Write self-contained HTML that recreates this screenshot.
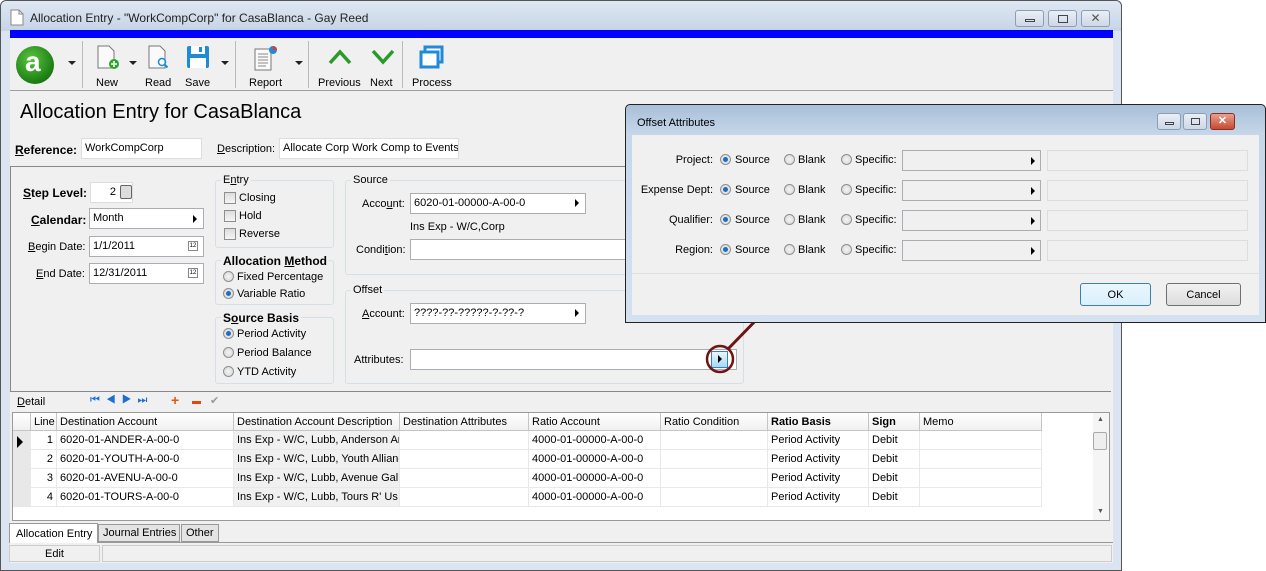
<!DOCTYPE html>
<html><head><meta charset="utf-8"><style>
*{box-sizing:border-box}
body{margin:0;width:1266px;height:571px;position:relative;background:#fff;font-family:"Liberation Sans",sans-serif;font-size:11px;color:#000;overflow:hidden}
.a{position:absolute}
.inp{position:absolute;background:#fff;border:1px solid #abadb3;padding:0 3px;line-height:19px;font-size:11px;white-space:nowrap;overflow:hidden}
.grp{position:absolute;border:1px solid #d5dfe5;border-radius:3px}
.gl{position:absolute;top:-8px;left:5px;background:#f0f0f0;padding:0 2px}
.rb{position:absolute;width:11px;height:11px;border-radius:50%;border:1px solid #8e8f8f;background:radial-gradient(#f4f4f4,#d4d4d4)}
.rb.on::after{content:"";position:absolute;left:2px;top:2px;width:5px;height:5px;border-radius:50%;background:#1a6fc4}
.cb{position:absolute;width:12px;height:12px;border:1px solid #8e8f8f;background:linear-gradient(#ddd,#f5f5f5)}
.tri{position:absolute;width:0;height:0;border-top:4px solid transparent;border-bottom:4px solid transparent;border-left:4px solid #000}
.lbl{position:absolute;white-space:nowrap}
.rl{position:absolute;white-space:nowrap;text-align:right;width:90px}
.th{position:absolute;top:0;height:18px;border-right:1px solid #c5c5c5;border-bottom:1px solid #c5c5c5;padding:3px 3px;background:linear-gradient(#fff,#f0f0f0);white-space:nowrap;overflow:hidden}
.td{position:absolute;height:19px;border-right:1px solid #e8e8e8;border-bottom:1px solid #e8e8e8;padding:3px 3px;white-space:nowrap;overflow:hidden;background:#fff}
.tbl{position:absolute;top:77px;font-size:11px;text-align:center}
.wb{position:absolute;width:29px;height:17px;border:1px solid #8d9db2;border-radius:3px;background:linear-gradient(#e9eff7,#cdd8e6)}
</style></head><body>
<div class="a" style="left:0;top:0;width:1122px;height:571px;background:#dbe5f1;border:1px solid #555;border-radius:6px 6px 0 0"></div>
<div class="a" style="left:1px;top:1px;width:1120px;height:30px;background:linear-gradient(#dfe8f3,#c5d4e6);border-radius:6px 6px 0 0"></div>
<svg class="a" style="left:10px;top:9px" width="14" height="17"><path d="M1 1h8l4 4v11H1z" fill="#fff" stroke="#888"/><path d="M9 1v4h4" fill="none" stroke="#888"/></svg>
<div class="lbl" style="left:30px;top:11px;font-size:12px;color:#222">Allocation Entry - "WorkCompCorp" for CasaBlanca - Gay Reed</div>
<div class="wb" style="left:1015px;top:10px"><div class="a" style="left:9px;top:8px;width:10px;height:3px;border:1px solid #444"></div></div>
<div class="wb" style="left:1048px;top:10px"><div class="a" style="left:9px;top:4px;width:10px;height:8px;border:1px solid #444"></div></div>
<div class="wb" style="left:1081px;top:10px;text-align:center;font-size:12px;color:#555;line-height:15px">✕</div>
<div class="a" style="left:10px;top:30px;width:1103px;height:8px;background:#0000ff"></div>
<div class="a" style="left:10px;top:38px;width:1103px;height:525px;background:#f0f0f0"></div>
<div class="a" style="left:10px;top:90px;width:1103px;height:1px;background:#a0a0a0"></div>
<div class="a" style="left:16px;top:46px;width:38px;height:38px;border-radius:50%;background:radial-gradient(circle at 40% 35%,#5cc443,#1b7d12 70%,#0e4f08)"></div>
<div class="lbl" style="left:25px;top:48px;font-size:28px;font-weight:bold;color:#fff;line-height:28px">a</div>
<div class="tri" style="left:68px;top:61px;border:4px solid transparent;border-top:4px solid #222"></div>
<div class="a" style="left:82px;top:41px;width:1px;height:47px;background:#bbb"></div>
<div class="a" style="left:235px;top:41px;width:1px;height:47px;background:#bbb"></div>
<div class="a" style="left:308px;top:41px;width:1px;height:47px;background:#bbb"></div>
<div class="a" style="left:402px;top:41px;width:1px;height:47px;background:#bbb"></div>
<svg class="a" style="left:96px;top:45px" width="26" height="26"><path d="M2 1h11l5 5v17H2z" fill="#fafafa" stroke="#777"/><circle cx="18" cy="19" r="5" fill="#2aa52a"/><path d="M18 16v6M15 19h6" stroke="#fff" stroke-width="1.6"/></svg>
<div class="tri" style="left:129px;top:61px;border:4px solid transparent;border-top:4px solid #222"></div>
<svg class="a" style="left:147px;top:45px" width="26" height="26"><path d="M2 1h11l5 5v17H2z" fill="#fafafa" stroke="#777"/><circle cx="15" cy="17" r="3.5" fill="none" stroke="#1c8ad6" stroke-width="1.5"/><path d="M17.5 19.5l3 3" stroke="#1c8ad6" stroke-width="2"/></svg>
<svg class="a" style="left:186px;top:45px" width="24" height="24"><rect x="1" y="1" width="22" height="22" rx="2" fill="#1e8ad8"/><rect x="5" y="1" width="14" height="8" fill="#fff"/><rect x="13" y="2" width="3" height="5" fill="#1e8ad8"/><rect x="4" y="13" width="16" height="10" fill="#fff"/></svg>
<div class="tri" style="left:221px;top:61px;border:4px solid transparent;border-top:4px solid #222"></div>
<svg class="a" style="left:252px;top:44px" width="28" height="28"><path d="M3 5h16v21H3z" fill="#fafafa" stroke="#777"/><path d="M6 10h10M6 13h10M6 16h10M6 19h10M6 22h8" stroke="#888"/><circle cx="21" cy="6" r="4" fill="#1e8ad8"/><path d="M21 6V2a4 4 0 0 1 4 4z" fill="#e53935"/></svg>
<div class="tri" style="left:295px;top:61px;border:4px solid transparent;border-top:4px solid #222"></div>
<svg class="a" style="left:327px;top:48px" width="26" height="18"><path d="M3 15L13 4l10 11" fill="none" stroke="#2a9a2a" stroke-width="3.5"/></svg>
<svg class="a" style="left:370px;top:48px" width="26" height="18"><path d="M3 3l10 11L23 3" fill="none" stroke="#2a9a2a" stroke-width="3.5"/></svg>
<svg class="a" style="left:419px;top:45px" width="26" height="26"><rect x="6" y="2" width="17" height="15" fill="#fff" stroke="#1e8ad8" stroke-width="3"/><rect x="2" y="7" width="17" height="15" fill="#fff" stroke="#1e8ad8" stroke-width="3"/></svg>
<div class="tbl" style="left:96px">New</div>
<div class="tbl" style="left:145px">Read</div>
<div class="tbl" style="left:185px">Save</div>
<div class="tbl" style="left:249px">Report</div>
<div class="tbl" style="left:318px">Previous</div>
<div class="tbl" style="left:370px">Next</div>
<div class="tbl" style="left:412px">Process</div>
<div class="lbl" style="left:20px;top:101px;font-size:20px">Allocation Entry for CasaBlanca</div>
<div class="lbl" style="left:15px;top:143px;font-weight:bold;font-size:12px"><u>R</u>eference:</div>
<div class="inp" style="left:81px;top:138px;width:121px;height:21px;border-color:#ddd">WorkCompCorp</div>
<div class="lbl" style="left:217px;top:143px"><u>D</u>escription:</div>
<div class="inp" style="left:279px;top:138px;width:180px;height:21px;border-color:#ddd">Allocate Corp Work Comp to Events</div>
<div class="a" style="left:10px;top:166px;width:1101px;height:226px;border:1px solid #888;border-right:none"></div>
<div class="lbl" style="left:23px;top:186px;font-weight:bold;font-size:12px"><u>S</u>tep Level:</div>
<div class="inp" style="left:90px;top:182px;width:43px;height:21px;text-align:right;padding-right:16px;border-color:#ddd">2</div>
<div class="a" style="left:120px;top:185px;width:12px;height:14px;border:1px solid #666;border-radius:2px;background:#ddd"></div>
<div class="lbl" style="left:31px;top:213px;font-weight:bold;font-size:12px"><u>C</u>alendar:</div>
<div class="inp" style="left:89px;top:208px;width:115px;height:21px">Month</div><div class="tri" style="left:193px;top:215px"></div>
<div class="lbl" style="left:28px;top:241px"><u>B</u>egin Date:</div>
<div class="inp" style="left:89px;top:236px;width:115px;height:21px">1/1/2011</div>
<div class="a" style="left:188px;top:241px;width:10px;height:10px;border:1px solid #888;font-size:6px;text-align:center;line-height:9px">12</div>
<div class="lbl" style="left:36px;top:268px"><u>E</u>nd Date:</div>
<div class="inp" style="left:89px;top:263px;width:115px;height:21px">12/31/2011</div>
<div class="a" style="left:188px;top:268px;width:10px;height:10px;border:1px solid #888;font-size:6px;text-align:center;line-height:9px">12</div>
<div class="grp" style="left:215px;top:180px;width:119px;height:68px"><span class="gl" style="top:-7px">E<u>n</u>try</span></div>
<div class="cb" style="left:224px;top:192px"></div><div class="lbl" style="left:239px;top:192px">Closing</div>
<div class="cb" style="left:224px;top:210px"></div><div class="lbl" style="left:239px;top:210px">Hold</div>
<div class="cb" style="left:224px;top:228px"></div><div class="lbl" style="left:239px;top:228px">Reverse</div>
<div class="grp" style="left:215px;top:260px;width:119px;height:45px"><span class="gl" style="left:5px;top:-7px;font-weight:bold;font-size:12px">Allocation <u>M</u>ethod</span></div>
<div class="rb" style="left:223px;top:271px"></div><div class="lbl" style="left:237px;top:271px">Fixed Percentage</div>
<div class="rb on" style="left:223px;top:288px"></div><div class="lbl" style="left:237px;top:288px">Variable Ratio</div>
<div class="grp" style="left:215px;top:317px;width:119px;height:67px"><span class="gl" style="top:-7px;font-weight:bold;font-size:12px">S<u>o</u>urce Basis</span></div>
<div class="rb on" style="left:223px;top:328px"></div><div class="lbl" style="left:237px;top:328px">Period Activity</div>
<div class="rb" style="left:223px;top:347px"></div><div class="lbl" style="left:237px;top:347px">Period Balance</div>
<div class="rb" style="left:223px;top:366px"></div><div class="lbl" style="left:237px;top:366px">YTD Activity</div>
<div class="grp" style="left:345px;top:180px;width:300px;height:95px"><span class="gl" style="top:-7px">Source</span></div>
<div class="lbl" style="left:362px;top:198px">Acco<u>u</u>nt:</div>
<div class="inp" style="left:410px;top:193px;width:176px;height:21px">6020-01-00000-A-00-0</div><div class="tri" style="left:575px;top:199px"></div>
<div class="lbl" style="left:410px;top:221px">Ins Exp - W/C,Corp</div>
<div class="lbl" style="left:356px;top:244px">Condi<u>t</u>ion:</div>
<div class="inp" style="left:410px;top:239px;width:230px;height:21px"></div>
<div class="grp" style="left:345px;top:290px;width:399px;height:94px"><span class="gl" style="top:-7px">Offset</span></div>
<div class="lbl" style="left:362px;top:308px"><u>A</u>ccount:</div>
<div class="inp" style="left:410px;top:303px;width:176px;height:21px">????-??-?????-?-??-?</div><div class="tri" style="left:575px;top:309px"></div>
<div class="lbl" style="left:354px;top:354px">Attributes:</div>
<div class="inp" style="left:410px;top:349px;width:327px;height:21px"></div>
<div class="a" style="left:711px;top:351px;width:17px;height:17px;border:1px solid #3c7fb1;background:linear-gradient(#eaf6fd,#a7d9f5)"></div><div class="tri" style="left:718px;top:355px"></div>
<svg class="a" style="left:700px;top:260px" width="120" height="120"><circle cx="20" cy="99" r="13" fill="none" stroke="#6e1414" stroke-width="2.5"/><path d="M28 89L98 17" stroke="#6e1414" stroke-width="3"/><path d="M106 8L89 16l9 9z" fill="#6e1414"/></svg>
<div class="lbl" style="left:17px;top:396px"><u>D</u>etail</div>
<div class="lbl" style="left:90px;top:394px;color:#1f6fd0;font-size:11px;letter-spacing:6px">⏮◀▶⏭</div>
<div class="lbl" style="left:171px;top:392px;color:#e05a10;font-weight:bold;font-size:14px">+</div>
<div class="a" style="left:192px;top:401px;width:9px;height:3px;background:#e04a10"></div>
<div class="lbl" style="left:210px;top:394px;color:#999">✔</div>
<div class="a" style="left:12px;top:412px;width:1098px;height:109px;background:#fff;border:1px solid #999"></div>
<div class="a" style="left:13px;top:413px;width:1080px;height:107px">
<div class="th" style="left:0;width:18px"></div>
<div class="th" style="left:18px;width:26px;text-align:right">Line</div>
<div class="th" style="left:44px;width:177px">Destination Account</div>
<div class="th" style="left:221px;width:166px">Destination Account Description</div>
<div class="th" style="left:387px;width:129px">Destination Attributes</div>
<div class="th" style="left:516px;width:132px">Ratio Account</div>
<div class="th" style="left:648px;width:107px">Ratio Condition</div>
<div class="th" style="left:755px;width:101px;font-weight:bold">Ratio Basis</div>
<div class="th" style="left:856px;width:51px;font-weight:bold">Sign</div>
<div class="th" style="left:907px;width:122px">Memo</div>
</div>
<div class="a" style="left:1093px;top:413px;width:16px;height:107px;background:#f5f5f5"><div class="a" style="left:0;top:19px;width:14px;height:18px;border:1px solid #aaa;border-radius:2px;background:#eee"></div><div class="lbl" style="left:4px;top:3px;font-size:7px;color:#555">▲</div><div class="lbl" style="left:4px;top:95px;font-size:7px;color:#555">▼</div></div>
<div class="a" style="left:13px;top:431px;width:1080px">
<div class="td" style="top:0;left:0;width:18px;background:#e8e8e8"></div><div class="tri" style="left:4px;top:5px;border-top-width:6px;border-bottom-width:6px;border-left-width:6px"></div>
<div class="td" style="top:19px;left:0;width:18px;background:#e8e8e8"></div>
<div class="td" style="top:38px;left:0;width:18px;background:#e8e8e8"></div>
<div class="td" style="top:57px;left:0;width:18px;background:#e8e8e8"></div>
</div>
<div class="a" style="left:31px;top:431px">
<div class="td" style="top:0;left:0;width:26px;text-align:right">1</div><div class="td" style="top:0;left:26px;width:177px">6020-01-ANDER-A-00-0</div><div class="td" style="top:0;left:203px;width:166px;background:#f0f0f0">Ins Exp - W/C, Lubb, Anderson Ar</div><div class="td" style="top:0;left:369px;width:129px"></div><div class="td" style="top:0;left:498px;width:132px">4000-01-00000-A-00-0</div><div class="td" style="top:0;left:630px;width:107px"></div><div class="td" style="top:0;left:737px;width:101px">Period Activity</div><div class="td" style="top:0;left:838px;width:51px">Debit</div><div class="td" style="top:0;left:889px;width:122px"></div>
<div class="td" style="top:19px;left:0;width:26px;text-align:right">2</div><div class="td" style="top:19px;left:26px;width:177px">6020-01-YOUTH-A-00-0</div><div class="td" style="top:19px;left:203px;width:166px;background:#f0f0f0">Ins Exp - W/C, Lubb, Youth Allianc</div><div class="td" style="top:19px;left:369px;width:129px"></div><div class="td" style="top:19px;left:498px;width:132px">4000-01-00000-A-00-0</div><div class="td" style="top:19px;left:630px;width:107px"></div><div class="td" style="top:19px;left:737px;width:101px">Period Activity</div><div class="td" style="top:19px;left:838px;width:51px">Debit</div><div class="td" style="top:19px;left:889px;width:122px"></div>
<div class="td" style="top:38px;left:0;width:26px;text-align:right">3</div><div class="td" style="top:38px;left:26px;width:177px">6020-01-AVENU-A-00-0</div><div class="td" style="top:38px;left:203px;width:166px;background:#f0f0f0">Ins Exp - W/C, Lubb, Avenue Galle</div><div class="td" style="top:38px;left:369px;width:129px"></div><div class="td" style="top:38px;left:498px;width:132px">4000-01-00000-A-00-0</div><div class="td" style="top:38px;left:630px;width:107px"></div><div class="td" style="top:38px;left:737px;width:101px">Period Activity</div><div class="td" style="top:38px;left:838px;width:51px">Debit</div><div class="td" style="top:38px;left:889px;width:122px"></div>
<div class="td" style="top:57px;left:0;width:26px;text-align:right">4</div><div class="td" style="top:57px;left:26px;width:177px">6020-01-TOURS-A-00-0</div><div class="td" style="top:57px;left:203px;width:166px;background:#f0f0f0">Ins Exp - W/C, Lubb, Tours R' Us</div><div class="td" style="top:57px;left:369px;width:129px"></div><div class="td" style="top:57px;left:498px;width:132px">4000-01-00000-A-00-0</div><div class="td" style="top:57px;left:630px;width:107px"></div><div class="td" style="top:57px;left:737px;width:101px">Period Activity</div><div class="td" style="top:57px;left:838px;width:51px">Debit</div><div class="td" style="top:57px;left:889px;width:122px"></div>
</div>
<div class="a" style="left:10px;top:542px;width:1103px;height:1px;background:#999"></div>
<div class="lbl" style="left:9px;top:523px;width:89px;height:20px;background:#fff;border:1px solid #999;border-bottom:none;padding:4px 6px">Allocation Entry</div>
<div class="lbl" style="left:98px;top:524px;width:82px;height:18px;background:#e4e4e4;border:1px solid #999;padding:2px 4px">Journal Entries</div>
<div class="lbl" style="left:181px;top:524px;width:38px;height:18px;background:#e4e4e4;border:1px solid #999;padding:2px 4px">Other</div>
<div class="a" style="left:9px;top:545px;width:91px;height:17px;border:1px solid #ccc;text-align:center;padding-top:2px">Edit</div>
<div class="a" style="left:102px;top:545px;width:1010px;height:17px;border:1px solid #ccc"></div>

<div class="a" style="left:625px;top:104px;width:641px;height:219px;background:linear-gradient(#a9bfd8,#c6d7ea 30px,#d4e1f0);border:1px solid #222;border-radius:5px 5px 0 0"></div>
<div class="lbl" style="left:637px;top:117px;font-size:11px">Offset Attributes</div>
<div class="wb" style="left:1157px;top:113px;width:24px;height:17px"><div class="a" style="left:7px;top:8px;width:9px;height:3px;border:1px solid #444"></div></div>
<div class="wb" style="left:1183px;top:113px;width:24px;height:17px"><div class="a" style="left:7px;top:4px;width:9px;height:7px;border:1px solid #444"></div></div>
<div class="wb" style="left:1210px;top:113px;width:25px;height:17px;background:linear-gradient(#e8a08e,#c74a30);border-color:#8a3020;color:#fff;text-align:center;font-weight:bold;line-height:15px">✕</div>
<div class="a" style="left:632px;top:135px;width:627px;height:180px;background:#f0f0f0"></div>
<div class="a" style="left:632px;top:273px;width:627px;height:1px;background:#dfdfdf"></div>
<div class="rl" style="left:623px;top:154px">Project:</div>
<div class="rl" style="left:623px;top:184px">Expense Dept:</div>
<div class="rl" style="left:623px;top:214px">Qualifier:</div>
<div class="rl" style="left:623px;top:244px">Region:</div>
<div class="rb on" style="left:720px;top:154px"></div><div class="lbl" style="left:735px;top:154px">Source</div><div class="rb" style="left:784px;top:154px"></div><div class="lbl" style="left:798px;top:154px">Blank</div><div class="rb" style="left:841px;top:154px"></div><div class="lbl" style="left:855px;top:154px">Specific:</div><div class="inp" style="left:902px;top:150px;width:139px;height:21px;background:#f0f0f0"></div><div class="tri" style="left:1031px;top:157px"></div><div class="inp" style="left:1047px;top:150px;width:201px;height:21px;background:#f0f0f0;border-color:#ddd"></div>
<div class="rb on" style="left:720px;top:184px"></div><div class="lbl" style="left:735px;top:184px">Source</div><div class="rb" style="left:784px;top:184px"></div><div class="lbl" style="left:798px;top:184px">Blank</div><div class="rb" style="left:841px;top:184px"></div><div class="lbl" style="left:855px;top:184px">Specific:</div><div class="inp" style="left:902px;top:180px;width:139px;height:21px;background:#f0f0f0"></div><div class="tri" style="left:1031px;top:187px"></div><div class="inp" style="left:1047px;top:180px;width:201px;height:21px;background:#f0f0f0;border-color:#ddd"></div>
<div class="rb on" style="left:720px;top:214px"></div><div class="lbl" style="left:735px;top:214px">Source</div><div class="rb" style="left:784px;top:214px"></div><div class="lbl" style="left:798px;top:214px">Blank</div><div class="rb" style="left:841px;top:214px"></div><div class="lbl" style="left:855px;top:214px">Specific:</div><div class="inp" style="left:902px;top:210px;width:139px;height:21px;background:#f0f0f0"></div><div class="tri" style="left:1031px;top:217px"></div><div class="inp" style="left:1047px;top:210px;width:201px;height:21px;background:#f0f0f0;border-color:#ddd"></div>
<div class="rb on" style="left:720px;top:244px"></div><div class="lbl" style="left:735px;top:244px">Source</div><div class="rb" style="left:784px;top:244px"></div><div class="lbl" style="left:798px;top:244px">Blank</div><div class="rb" style="left:841px;top:244px"></div><div class="lbl" style="left:855px;top:244px">Specific:</div><div class="inp" style="left:902px;top:240px;width:139px;height:21px;background:#f0f0f0"></div><div class="tri" style="left:1031px;top:247px"></div><div class="inp" style="left:1047px;top:240px;width:201px;height:21px;background:#f0f0f0;border-color:#ddd"></div>
<div class="a" style="left:1080px;top:283px;width:71px;height:23px;border:1px solid #3c7fb1;border-radius:3px;background:linear-gradient(#eaf6fd,#d9f0fc);text-align:center;padding-top:5px">OK</div>
<div class="a" style="left:1166px;top:283px;width:75px;height:23px;border:1px solid #707070;border-radius:3px;background:linear-gradient(#f2f2f2,#dddddd);text-align:center;padding-top:5px">Cancel</div>
</body></html>
